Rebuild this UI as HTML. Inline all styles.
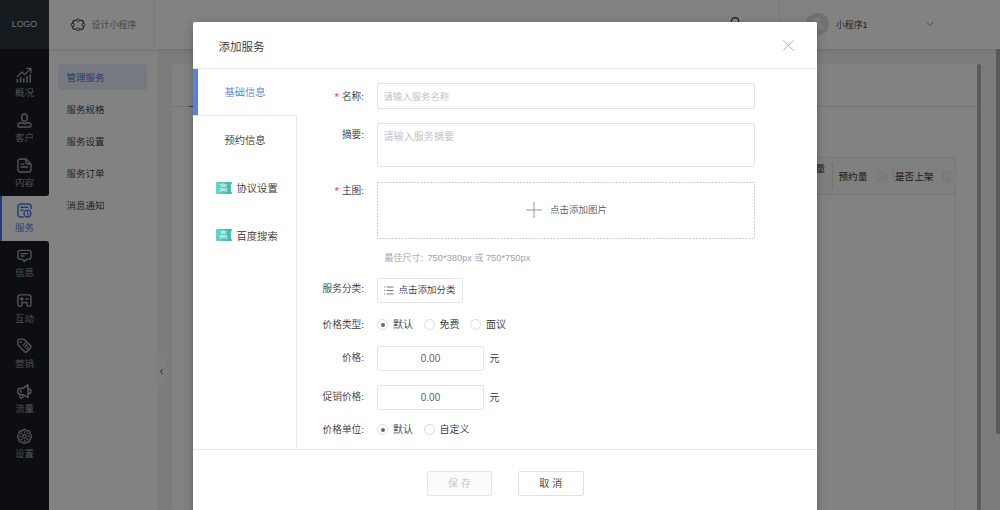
<!DOCTYPE html>
<html lang="zh-CN">
<head>
<meta charset="utf-8">
<title>添加服务</title>
<style>
*{box-sizing:border-box;margin:0;padding:0}
html,body{width:1000px;height:510px;overflow:hidden;background:#f0f2f5}
body{font-family:"Liberation Sans","Noto Sans CJK SC",sans-serif;font-size:10px;color:#333;position:relative;font-weight:350}
.abs{position:absolute}
/* ---------- underlying page ---------- */
#base{position:absolute;left:0;top:0;width:1000px;height:510px;background:#f3f4f5;overflow:hidden}
#side{position:absolute;left:0;top:0;width:49px;height:510px;background:#fff}
#logo{position:absolute;left:0;top:0;width:49px;height:49px;background:#28333b;color:#e0e0e0;font-size:8.8px;line-height:49px;text-align:center}
#sidetop{position:absolute;left:0;top:49px;width:49px;height:13px;background:#1a1c24}
.mi{position:absolute;left:0;width:49px;height:45.2px;background:#1a1c24;color:#a8a8a8;text-align:center}
.mi svg{position:absolute;left:16.1px;top:6px;width:16px;height:16px;overflow:visible}
.mi span{position:absolute;left:0;width:49px;top:25.2px;line-height:14px;font-size:9.5px}
.mi.on{background:#fff;color:#4a72e8}
.mi.on i{position:absolute;left:0;top:0;width:2px;height:45.2px;background:#4a72e8}
#sidefill{position:absolute;left:0;top:466px;width:49px;height:44px;background:#1a1c24}
#hdr{position:absolute;left:49px;top:0;width:951px;height:49px;background:#fff;box-shadow:0 1px 4px rgba(0,0,0,.14)}
#sub{position:absolute;left:49px;top:49px;width:108px;height:461px;background:#fff}
.si{position:absolute;left:9px;width:89px;height:26px;line-height:27px;padding-left:8.5px;font-size:9.5px;color:#333;border-radius:3px}
.si.on{background:#e8edfb;color:#3f63d8}
#card{position:absolute;left:172px;top:64px;width:806px;height:446px;background:#fff;border-radius:2px}
/* ---------- mask + modal ---------- */
#mask{position:absolute;left:0;top:0;width:1000px;height:510px;background:rgba(0,0,0,.49)}
#modal{position:absolute;left:193px;top:22px;width:624px;height:500px;background:#fff;border-radius:1.5px;box-shadow:0 3px 10px rgba(0,0,0,.25)}
#mtitle{position:absolute;left:25.5px;top:15px;font-size:11.5px;line-height:20px;color:#333}
.hline{position:absolute;left:0;width:624px;height:1px;background:#e9e9e9}
.tab{position:absolute;left:0;width:104px;height:47px;font-size:10px;line-height:47px;color:#333;white-space:nowrap}
.lab{position:absolute;left:91px;width:80px;text-align:right;font-size:9.7px;line-height:14px;color:#333;white-space:nowrap}
.lab b{color:#f4444d;font-weight:normal;margin-right:3px;font-size:11.5px;position:relative;top:1.2px;font-family:"Liberation Sans",sans-serif}
.inp{position:absolute;border:1px solid #e3e3e8;border-radius:2px;background:#fff;font-size:10px;color:#bdbdbd;white-space:nowrap}
.radio{position:absolute;width:11px;height:11px;border:1px solid #dcdcdc;border-radius:50%;background:#fff}
.radio.on::after{content:"";position:absolute;left:2.5px;top:2.5px;width:4px;height:4px;border-radius:50%;background:#666}
.rt{position:absolute;font-size:10px;line-height:14px;color:#333;white-space:nowrap}
.btn{position:absolute;top:449px;height:25px;border:1px solid #e0e0e0;border-radius:2px;font-size:10px;line-height:23px;text-align:center;background:#fff;white-space:nowrap}
.info{position:absolute;width:11px;height:11px;border:1px solid #e0e0e0;border-radius:50%;font-size:7.5px;line-height:9px;text-align:center;color:#d0d0d0;font-family:"Liberation Serif",serif}

</style>
</head>
<body>
<div id="base">
<div id="sub">
  <div class="si on" style="top:15px">管理服务</div>
  <div class="si" style="top:47px">服务规格</div>
  <div class="si" style="top:79px">服务设置</div>
  <div class="si" style="top:111px">服务订单</div>
  <div class="si" style="top:143px">消息通知</div>
</div>
<div id="card">
  <div style="position:absolute;left:0;top:42px;width:806px;height:1px;background:#e4e4e4"></div>
  <div style="position:absolute;left:17px;top:41.6px;width:30px;height:1.5px;background:#3f63d8"></div>
  <div id="thead" style="position:absolute;left:24px;top:93px;width:760px;height:37.6px;background:#fafafa;border:1px solid #ededed;border-bottom-color:#e6e6e6"></div>
  <div style="position:absolute;left:783px;top:130px;width:1px;height:320px;background:#ececec"></div>
  <div style="position:absolute;left:643.5px;top:98px;font-size:9.6px;line-height:14px;color:#333;font-weight:400">量</div>
  <div style="position:absolute;left:660px;top:99px;width:1px;height:26px;background:#e4e4e4"></div>
  <div style="position:absolute;left:666.5px;top:105.6px;font-size:9.6px;line-height:14px;color:#333;font-weight:400">预约量</div>
  <div class="info" style="left:704.2px;top:106.8px">i</div>
  <div style="position:absolute;left:721px;top:106px;width:1px;height:12px;background:#e4e4e4"></div>
  <div style="position:absolute;left:723px;top:105.6px;font-size:9.6px;line-height:14px;color:#333;font-weight:400">是否上架</div>
  <div class="info" style="left:769.7px;top:106.8px">i</div>
</div>
<div id="sbar1" style="position:absolute;left:977px;top:64px;width:4px;height:460px;border-radius:2px;background:#b4b4b4"></div>
<div id="sbar2" style="position:absolute;left:996px;top:49px;width:5px;height:385px;border-radius:2px 0 0 2px;background:#b0b0b0"></div>
<svg style="position:absolute;left:157px;top:351px;width:9px;height:40px" viewBox="0 0 9 40"><path d="M0 0L9 10V29L0 40Z" fill="#fafafa"/><path d="M5.6 18.2L3.6 20.6 5.6 23" fill="none" stroke="#777" stroke-width="1.1"/></svg>
<div id="hdr">
  <svg style="position:absolute;left:20.5px;top:17.5px;width:16px;height:14px;overflow:visible" viewBox="0 0 16 14">
    <rect x="2.7" y="2.3" width="10.8" height="9" rx="2.6" fill="none" stroke="#4a4a4a" stroke-width="1.35"/>
    <circle cx="8.1" cy="2.3" r="1.5" fill="#fff" stroke="#4a4a4a" stroke-width="0.95"/>
    <circle cx="8.1" cy="11.3" r="1.5" fill="#fff" stroke="#4a4a4a" stroke-width="0.95"/>
    <circle cx="13.5" cy="6.8" r="1.5" fill="#fff" stroke="#4a4a4a" stroke-width="0.95"/>
    <circle cx="2.7" cy="6.8" r="1.5" fill="#fff" stroke="#3558d8" stroke-width="1.1"/>
  </svg>
  <div style="position:absolute;left:42.5px;top:17.7px;font-size:9px;line-height:14px;color:#7a7a7a;white-space:nowrap">设计小程序</div>
  <div style="position:absolute;left:105px;top:0;width:1px;height:49px;background:#ececec"></div>
  <svg style="position:absolute;left:680px;top:16px;width:12px;height:14px;overflow:visible" viewBox="0 0 12 14"><path d="M6 1.6C3.8 1.6 2.4 3.2 2.4 5.4V8.8L1.2 10.6H10.8L9.6 8.8V5.4C9.6 3.2 8.2 1.6 6 1.6Z" fill="none" stroke="#333" stroke-width="1.2"/></svg>
  <div style="position:absolute;left:730px;top:0;width:1px;height:49px;background:#ececec"></div>
  <div style="position:absolute;left:756.9px;top:12.6px;width:22.8px;height:22.8px;border-radius:50%;background:#dedede;overflow:hidden">
    <div style="position:absolute;left:8.6px;top:4.4px;width:5.8px;height:6px;border-radius:50%;background:#f6f6f6"></div>
    <div style="position:absolute;left:5px;top:10.6px;width:13px;height:6.6px;border-radius:6px 6px 2.5px 2.5px;background:#f6f6f6"></div>
  </div>
  <div style="position:absolute;left:787px;top:17.6px;font-size:8.9px;line-height:14px;color:#333;white-space:nowrap">小程序1</div>
  <svg style="position:absolute;left:877px;top:21px;width:8px;height:6px;overflow:visible" viewBox="0 0 8 6"><path d="M0.8 1.2L4 4.4 7.2 1.2" fill="none" stroke="#8a8a8a" stroke-width="0.9"/></svg>
</div>

<div id="side">
<div id="logo">LOGO</div><div id="sidetop"></div>
<div class="mi" style="top:60.9px;"><svg viewBox="0 0 16 16"><g fill="none" stroke="currentColor" stroke-width="1.5" stroke-linecap="round" stroke-linejoin="round"><path d="M1.3 9.6L6 5 8.6 7.6 14.6 1.6M10.6 1.3H14.9V5.6" stroke-width="1.3"/></g><g fill="currentColor"><rect x="0.6" y="12" width="1.5" height="3.6"/><rect x="3.9" y="10.2" width="1.5" height="5.4"/><rect x="7.1" y="11.3" width="1.5" height="4.3"/><rect x="10.3" y="9" width="1.5" height="6.6"/><rect x="13.5" y="7.2" width="1.5" height="8.4"/></g></svg><span>概况</span></div>
<div class="mi" style="top:106.0px;"><svg style="left:17.1px;top:7.1px;width:14.9px;height:14.9px" viewBox="0 0 16 16"><g fill="none" stroke="currentColor" stroke-width="1.5" stroke-linecap="round" stroke-linejoin="round"><ellipse cx="8" cy="4.9" rx="3" ry="3.9"/><path d="M8 11.9C6.6 10.6 4.6 10.3 2.6 10.7 1.6 10.9 1 11.7 1 12.7V13.9C1 14.6 1.5 15.1 2.2 15.1H13.8C14.5 15.1 15 14.6 15 13.9V12.7C15 11.7 14.4 10.9 13.4 10.7 11.4 10.3 9.4 10.6 8 11.9Z"/></g></svg><span>客户</span></div>
<div class="mi" style="top:151.1px;border-bottom-right-radius:3px;"><svg style="left:17.1px;top:7.1px;width:14.9px;height:14.9px" viewBox="0 0 16 16"><g fill="none" stroke="currentColor" stroke-width="1.5" stroke-linecap="round" stroke-linejoin="round"><path d="M9.6 1H3.6C2.2 1 1 2.2 1 3.6V12.4C1 13.8 2.2 15 3.6 15H12.4C13.8 15 15 13.8 15 12.4V6.4L9.6 1ZM9.6 1V4.4C9.6 5.5 10.5 6.4 11.6 6.4H15"/><path d="M4.4 6.6H7.4M4.4 9.6H11.4"/></g></svg><span>内容</span></div>
<div class="mi on" style="top:196.2px;"><i></i><svg style="left:17.1px;top:7.1px;width:14.9px;height:14.9px" viewBox="0 0 16 16"><g fill="none" stroke="currentColor" stroke-width="1.5" stroke-linecap="round" stroke-linejoin="round"><path d="M6.6 15H3.6C2.2 15 1 13.8 1 12.4V3.6C1 2.2 2.2 1 3.6 1H12.4C13.8 1 15 2.2 15 3.6V6.2"/><path d="M4.2 4.5H11.8M4.2 7.8H6.6"/><circle cx="11.2" cy="11.3" r="3.7"/><path d="M11.2 9.3V11.3L12.6 12.7" stroke-width="1.2"/></g></svg><span>服务</span></div>
<div class="mi" style="top:241.3px;border-top-right-radius:3px;"><svg style="left:17.1px;top:7.1px;width:14.9px;height:14.9px" viewBox="0 0 16 16"><g fill="none" stroke="currentColor" stroke-width="1.5" stroke-linecap="round" stroke-linejoin="round"><path d="M3.4 2.6H12.6C13.9 2.6 15 3.7 15 5V9.6C15 10.9 13.9 12 12.6 12H10.4L8 14.6 5.6 12H3.4C2.1 12 1 10.9 1 9.6V5C1 3.7 2.1 2.6 3.4 2.6Z"/><path d="M4.4 6H11.6M4.4 8.6H7.6"/></g></svg><span>信息</span></div>
<div class="mi" style="top:286.4px;"><svg style="left:17.1px;top:7.1px;width:14.9px;height:14.9px" viewBox="0 0 16 16"><g fill="none" stroke="currentColor" stroke-width="1.5" stroke-linecap="round" stroke-linejoin="round"><path d="M3.8 2H12.2C13.7 2 15 3.3 15 4.8V12.6C15 13.6 14.2 14.4 13.2 14.4H12.6C11.6 14.4 10.8 13.6 10.8 12.6V10.2H5.2V12.6C5.2 13.6 4.4 14.4 3.4 14.4H2.8C1.8 14.4 1 13.6 1 12.6V4.8C1 3.3 2.3 2 3.8 2Z"/><path d="M3.6 6.5H6.6M5.1 5V8M9.6 6.5H12.2"/></g></svg><span>互动</span></div>
<div class="mi" style="top:331.5px;"><svg style="left:17.1px;top:7.1px;width:14.9px;height:14.9px" viewBox="0 0 16 16"><g transform="translate(0 -0.9)"><g fill="none" stroke="currentColor" stroke-width="1.5" stroke-linecap="round" stroke-linejoin="round" style="stroke-width:1.5"><path d="M2.6 1H6.6C7.1 1 7.6 1.2 8 1.6L14.4 8C15.2 8.8 15.2 10 14.4 10.8L10.8 14.4C10 15.2 8.8 15.2 8 14.4L1.6 8C1.2 7.6 1 7.1 1 6.6V2.6C1 1.7 1.7 1 2.6 1Z"/><path d="M6.6 7.6L8.9 5.3M8.6 9.6L10.9 7.3M10.5 11.6L12.2 9.9"/></g><circle cx="4.2" cy="4.2" r="1.05" fill="currentColor"/></g></svg><span>营销</span></div>
<div class="mi" style="top:376.6px;"><svg style="left:17.1px;top:7.1px;width:14.9px;height:14.9px" viewBox="0 0 16 16"><g fill="none" stroke="currentColor" stroke-width="1.5" stroke-linecap="round" stroke-linejoin="round"><path d="M11.8 0.9V14.6L6.6 11.4H3.8C2.3 11.4 1 10.1 1 8.6V7.2C1 5.7 2.3 4.4 3.8 4.4H6.6L11.8 0.9Z"/><path d="M3.2 11.4V13.6C3.2 14.4 3.8 15 4.6 15H5C5.8 15 6.4 14.4 6.4 13.6V11.4"/><path d="M4.2 6.4V9.2"/><path d="M12 5.2C13.7 5.2 15 6.4 15 7.9 15 9.4 13.7 10.6 12 10.6"/></g></svg><span>流量</span></div>
<div class="mi" style="top:421.7px;"><svg style="left:17.1px;top:7.1px;width:14.9px;height:14.9px" viewBox="0 0 16 16"><g fill="none" stroke="currentColor" stroke-width="1.35" stroke-linecap="round" stroke-linejoin="round"><path d="M5.63 2.27A2.45 2.45 0 0 1 10.37 2.27A2.45 2.45 0 0 1 13.73 5.63A2.45 2.45 0 0 1 13.73 10.37A2.45 2.45 0 0 1 10.37 13.73A2.45 2.45 0 0 1 5.63 13.73A2.45 2.45 0 0 1 2.27 10.37A2.45 2.45 0 0 1 2.27 5.63A2.45 2.45 0 0 1 5.63 2.27Z"/><circle cx="8" cy="8" r="1.9"/><path d="M11.90 8.00L13.30 8.00M10.76 10.76L11.75 11.75M8.00 11.90L8.00 13.30M5.24 10.76L4.25 11.75M4.10 8.00L2.70 8.00M5.24 5.24L4.25 4.25M8.00 4.10L8.00 2.70M10.76 5.24L11.75 4.25"/></g></svg><span>设置</span></div>
<div id="sidefill"></div>
</div>
</div>
<div id="mask"></div>
<div id="modal">
<div id="mtitle">添加服务</div>
<svg style="position:absolute;left:590px;top:17.9px;width:10.8px;height:10.8px;overflow:visible" viewBox="0 0 10 10"><path d="M0.3 0.3L9.7 9.7M9.7 0.3L0.3 9.7" fill="none" stroke="#a6a6a6" stroke-width="0.8"/></svg>
<div class="hline" style="top:46px"></div>
<!-- tabs -->
<div style="position:absolute;left:0;top:93px;width:104px;height:334px;border-top:1px solid #e9e9e9;border-right:1px solid #e9e9e9"></div>
<div style="position:absolute;left:0;top:47px;width:4.7px;height:46px;background:#5b7fe0"></div>
<div class="tab" style="top:47.2px;text-align:center;color:#5278e0;font-size:10.3px">基础信息</div>
<div class="tab" style="top:94.7px;text-align:center;font-size:10.3px">预约信息</div>
<div class="tab" style="top:143.2px;padding-left:43.5px;font-size:10.3px">协议设置</div>
<div class="tab" style="top:190.5px;padding-left:43.5px;font-size:10.3px">百度搜索</div>
<svg class="badge" style="position:absolute;left:23px;top:160px;width:16px;height:12px" viewBox="0 0 16 12"><defs><linearGradient id="g1" x1="0" y1="0" x2="1" y2="0"><stop offset="0" stop-color="#63d8cb"/><stop offset="1" stop-color="#3bb5aa"/></linearGradient></defs><path d="M1 0H15.5L16 1.2 14.8 2.8V9.2L16 10.8 15.5 12H1Q0 12 0 11V1Q0 0 1 0Z" fill="url(#g1)"/><text x="7.2" y="9.4" font-size="8.6" fill="#e9fbf8" text-anchor="middle" font-family="'Liberation Sans','Noto Sans CJK SC',sans-serif">高</text></svg>
<svg class="badge" style="position:absolute;left:23px;top:207px;width:16px;height:12px" viewBox="0 0 16 12"><path d="M1 0H15.5L16 1.2 14.8 2.8V9.2L16 10.8 15.5 12H1Q0 12 0 11V1Q0 0 1 0Z" fill="url(#g1)"/><text x="7.2" y="9.4" font-size="8.6" fill="#e9fbf8" text-anchor="middle" font-family="'Liberation Sans','Noto Sans CJK SC',sans-serif">高</text></svg>
<!-- form -->
<div class="lab" style="top:67.2px"><b>*</b>名称:</div>
<div class="inp" style="left:184px;top:61px;width:378px;height:25.5px;line-height:25.5px;padding-left:5.5px;font-size:9.4px">请输入服务名称</div>
<div class="lab" style="top:105.5px">摘要:</div>
<div class="inp" style="left:184px;top:101px;width:378px;height:43.5px;line-height:14px;padding:5.8px 0 0 5.5px;font-size:10.1px">请输入服务摘要</div>
<div class="lab" style="top:160.5px"><b>*</b>主图:</div>
<svg style="position:absolute;left:184px;top:159.5px;width:378px;height:57px" viewBox="0 0 378 57"><rect x="0.5" y="0.5" width="377" height="56" fill="none" stroke="#c4c4c4" stroke-width="1" stroke-dasharray="1.6 1.5"/></svg>
<svg style="position:absolute;left:332.7px;top:180.3px;width:16px;height:16px" viewBox="0 0 16 16"><path d="M8 0V16M0 8H16" stroke="#999" stroke-width="1"/></svg>
<div class="rt" style="left:357px;top:181px;font-size:9.5px;color:#555">点击添加图片</div>
<div class="rt" style="left:191.5px;top:229px;font-size:9px;color:#a2a2a2">最佳尺寸:<span style="font-size:9.3px;margin-left:4.4px">750*380px</span> 或 <span style="font-size:9.3px">750*750px</span></div>
<div class="lab" style="top:259.5px">服务分类:</div>
<div class="inp" style="left:184px;top:256px;width:86px;height:24.5px"></div>
<svg style="position:absolute;left:190.5px;top:263.5px;width:10px;height:9px" viewBox="0 0 10 9"><path d="M2.6 1H9.6M2.6 4.5H9.6M2.6 8H9.6" stroke="#555" stroke-width="0.8"/><path d="M0.2 1H1.2M0.2 4.5H1.2M0.2 8H1.2" stroke="#555" stroke-width="0.8"/></svg>
<div class="rt" style="left:205.5px;top:261px;font-size:9.5px;color:#333">点击添加分类</div>
<div class="lab" style="top:295.5px">价格类型:</div>
<div class="radio on" style="left:184px;top:297px"></div><div class="rt" style="left:200px;top:295.5px">默认</div>
<div class="radio" style="left:230.5px;top:297px"></div><div class="rt" style="left:246.5px;top:295.5px">免费</div>
<div class="radio" style="left:276.5px;top:297px"></div><div class="rt" style="left:293px;top:295.5px">面议</div>
<div class="lab" style="top:328.5px">价格:</div>
<div class="inp" style="left:184px;top:324px;width:107px;height:24.5px;line-height:23px;text-align:center;color:#606060">0.00</div>
<div class="rt" style="left:296.5px;top:330px">元</div>
<div class="lab" style="top:367.5px">促销价格:</div>
<div class="inp" style="left:184px;top:362.5px;width:107px;height:25px;line-height:23px;text-align:center;color:#606060">0.00</div>
<div class="rt" style="left:296.5px;top:368.5px">元</div>
<div class="lab" style="top:400.5px">价格单位:</div>
<div class="radio on" style="left:184px;top:402px"></div><div class="rt" style="left:200px;top:400.5px">默认</div>
<div class="radio" style="left:230.5px;top:402px"></div><div class="rt" style="left:246.5px;top:400.5px">自定义</div>
<div class="hline" style="top:427px"></div>
<div class="btn" style="left:234px;width:65px;background:#fbfbfb;color:#c4c4c4;border-color:#e6e6e6">保 存</div>
<div class="btn" style="left:325px;width:65.5px;color:#333">取 消</div>

</div>
</body>
</html>
